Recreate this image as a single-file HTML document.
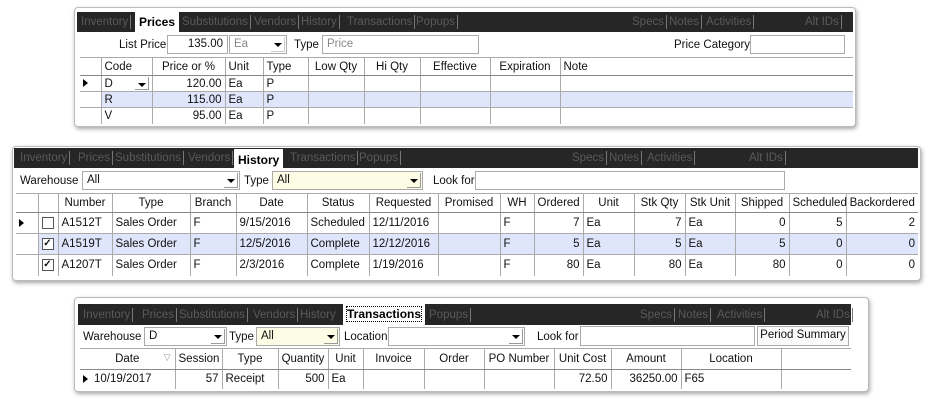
<!DOCTYPE html>
<html><head><meta charset="utf-8"><style>
*{box-sizing:border-box;margin:0;padding:0}
body{width:934px;height:403px;background:#fff;font-family:"Liberation Sans",sans-serif;font-size:11.5px;color:#111;position:relative;overflow:hidden}
.p{position:absolute;background:#fff;border:1px solid #bbb;border-radius:4px;box-shadow:1px 2px 4px rgba(0,0,0,.35)}
.bar{position:absolute;background:#262626;height:20px}
.t{position:absolute;top:3px;color:#5a5a5a;font-size:11.5px;white-space:nowrap;border-right:1px solid #777;padding:0 2px;line-height:14px}
.act{position:absolute;background:#fff;font-weight:bold;color:#000;height:22px;line-height:22px;padding:0 4px;font-size:12px}
.l{position:absolute;white-space:nowrap;font-size:11.5px;line-height:14px}
.in{position:absolute;border:1px solid #aaa;background:#fff;height:19px;line-height:17px;padding:0 4px;font-size:11.5px;white-space:nowrap}
.dd{position:absolute;right:1px;top:1px;width:14px;height:15px;border-right:1px solid #999;border-bottom:1px solid #999}
.dd:after{content:"";position:absolute;left:3px;top:6px;border:4px solid transparent;border-top:4px solid #000;border-bottom:0}
table{position:absolute;border-collapse:collapse;table-layout:fixed}
td{border:1px solid #aaa;padding:0 3px;white-space:nowrap;overflow:hidden;font-size:11.5px;line-height:14px}
tr.h td{text-align:center;border-bottom:1px solid #888}
tr.s td{background:#dfe6fb}
.r{text-align:right}
.ar{display:inline-block;border:4px solid transparent;border-left:5px solid #000;border-right:0;vertical-align:middle}
.cb{display:inline-block;width:12px;height:12px;border:1px solid #555;background:#fff;vertical-align:middle;font-size:10px;line-height:10px;text-align:center;font-weight:bold}
.nb td{border-bottom:0}
.p1 tr{height:16px}.p1 tr.h{height:18px}
.p2 tr{height:21px}.p2 tr.h{height:19px}
.p3 tr{height:19px}.p3 tr.h{height:21px}
</style></head><body>

<!-- Panel 1 -->
<div class="p" style="left:74px;top:7px;width:782px;height:120px"></div>
<div class="bar" style="left:77px;top:12px;width:776px"></div>
<span class="t" style="left:79px;top:15px">Inventory</span>
<div class="act" style="left:135px;top:11px">Prices</div>
<span class="t" style="left:180px;top:15px">Substitutions</span>
<span class="t" style="left:252px;top:15px">Vendors</span>
<span class="t" style="left:299px;top:15px">History</span>
<span class="t" style="left:345px;top:15px">Transactions</span>
<span class="t" style="left:414px;top:15px">Popups</span>
<span class="t" style="left:630px;top:15px">Specs</span>
<span class="t" style="left:667px;top:15px">Notes</span>
<span class="t" style="left:704px;top:15px">Activities</span>
<span class="t" style="left:803px;top:15px">Alt IDs</span>
<span class="l" style="left:119px;top:38px">List Price</span>
<div class="in r" style="left:167px;top:35px;width:61px">135.00</div>
<div class="in" style="left:229px;top:35px;width:58px;color:#888">Ea<span class="dd" style="border-color:#ccc;display:block"></span></div>
<span class="l" style="left:294px;top:38px">Type</span>
<div class="in" style="left:322px;top:35px;width:157px;color:#888">Price</div>
<span class="l" style="left:674px;top:38px">Price Category</span>
<div class="in" style="left:750px;top:35px;width:95px"></div>
<table class="p1" style="left:80px;top:57px;width:773px">
<colgroup><col style="width:21px"><col style="width:51px"><col style="width:73px"><col style="width:38px"><col style="width:45px"><col style="width:56px"><col style="width:56px"><col style="width:70px"><col style="width:70px"><col></colgroup>
<tr class="h"><td style="border-left:0"></td><td style="text-align:left">Code</td><td class="r">Price or %</td><td style="text-align:left">Unit</td><td style="text-align:left">Type</td><td>Low Qty</td><td>Hi Qty</td><td class="r">Effective</td><td class="r">Expiration</td><td style="text-align:left;border-right:0">Note</td></tr>
<tr><td style="border-left:0"><span class="ar"></span></td><td style="position:relative">D<span class="dd" style="top:1px;right:3px;width:14px;height:13px"></span></td><td class="r">120.00</td><td>Ea</td><td>P</td><td></td><td></td><td></td><td></td><td style="border-right:0"></td></tr>
<tr class="s"><td style="background:#fff;border-left:0"></td><td>R</td><td class="r">115.00</td><td>Ea</td><td>P</td><td></td><td></td><td></td><td></td><td style="border-right:0"></td></tr>
<tr class="nb"><td style="border-left:0"></td><td>V</td><td class="r">95.00</td><td>Ea</td><td>P</td><td></td><td></td><td></td><td></td><td style="border-right:0"></td></tr>
</table>

<!-- Panel 2 -->
<div class="p" style="left:12px;top:146px;width:909px;height:135px"></div>
<div class="bar" style="left:14px;top:148px;width:904px"></div>
<span class="t" style="left:18px;top:151px">Inventory</span>
<span class="t" style="left:76px;top:151px">Prices</span>
<span class="t" style="left:113px;top:151px">Substitutions</span>
<span class="t" style="left:186px;top:151px">Vendors</span>
<div class="act" style="left:234px;top:149px">History</div>
<span class="t" style="left:288px;top:151px">Transactions</span>
<span class="t" style="left:357px;top:151px">Popups</span>
<span class="t" style="left:570px;top:151px">Specs</span>
<span class="t" style="left:607px;top:151px">Notes</span>
<span class="t" style="left:645px;top:151px">Activities</span>
<span class="t" style="left:747px;top:151px">Alt IDs</span>
<span class="l" style="left:20px;top:174px">Warehouse</span>
<div class="in" style="left:82px;top:171px;width:158px">All<span class="dd"></span></div>
<span class="l" style="left:244px;top:174px">Type</span>
<div class="in" style="left:272px;top:171px;width:151px;background:#fdfde6">All<span class="dd"></span></div>
<span class="l" style="left:433px;top:174px">Look for</span>
<div class="in" style="left:475px;top:171px;width:310px"></div>
<table class="p2" style="left:16px;top:193px;width:902px">
<colgroup><col style="width:22px"><col style="width:20px"><col style="width:54px"><col style="width:78px"><col style="width:46px"><col style="width:71px"><col style="width:62px"><col style="width:69px"><col style="width:62px"><col style="width:34px"><col style="width:49px"><col style="width:51px"><col style="width:51px"><col style="width:50px"><col style="width:54px"><col style="width:57px"><col></colgroup>
<tr class="h"><td style="border-left:0"></td><td></td><td>Number</td><td>Type</td><td>Branch</td><td>Date</td><td>Status</td><td>Requested</td><td>Promised</td><td>WH</td><td>Ordered</td><td>Unit</td><td>Stk Qty</td><td>Stk Unit</td><td>Shipped</td><td>Scheduled</td><td style="border-right:0">Backordered</td></tr>
<tr><td style="border-left:0"><span class="ar"></span></td><td><span class="cb"></span></td><td>A1512T</td><td>Sales Order</td><td>F</td><td>9/15/2016</td><td>Scheduled</td><td>12/11/2016</td><td></td><td>F</td><td class="r">7</td><td>Ea</td><td class="r">7</td><td>Ea</td><td class="r">0</td><td class="r">5</td><td class="r" style="border-right:0">2</td></tr>
<tr class="s"><td style="background:#fff;border-left:0"></td><td><span class="cb">✓</span></td><td>A1519T</td><td>Sales Order</td><td>F</td><td>12/5/2016</td><td>Complete</td><td>12/12/2016</td><td></td><td>F</td><td class="r">5</td><td>Ea</td><td class="r">5</td><td>Ea</td><td class="r">5</td><td class="r">0</td><td class="r" style="border-right:0">0</td></tr>
<tr class="nb"><td style="border-left:0"></td><td><span class="cb">✓</span></td><td>A1207T</td><td>Sales Order</td><td>F</td><td>2/3/2016</td><td>Complete</td><td>1/19/2016</td><td></td><td>F</td><td class="r">80</td><td>Ea</td><td class="r">80</td><td>Ea</td><td class="r">80</td><td class="r">0</td><td class="r" style="border-right:0">0</td></tr>
</table>

<!-- Panel 3 -->
<div class="p" style="left:74px;top:297px;width:795px;height:95px"></div>
<div class="bar" style="left:78px;top:304px;width:773px;height:21px"></div>
<span class="t" style="left:81px;top:308px">Inventory</span>
<span class="t" style="left:140px;top:308px">Prices</span>
<span class="t" style="left:177px;top:308px">Substitutions</span>
<span class="t" style="left:251px;top:308px">Vendors</span>
<span class="t" style="left:298px;top:308px;border:0">History</span>
<div class="act" style="left:343px;top:303px"><span style="outline:1px dotted #000">Transactions</span></div>
<span class="t" style="left:427px;top:308px">Popups</span>
<span class="t" style="left:638px;top:308px">Specs</span>
<span class="t" style="left:676px;top:308px">Notes</span>
<span class="t" style="left:715px;top:308px">Activities</span>
<span class="t" style="left:814px;top:308px">Alt IDs</span>
<span class="l" style="left:83px;top:330px">Warehouse</span>
<div class="in" style="left:144px;top:327px;width:83px">D<span class="dd"></span></div>
<span class="l" style="left:229px;top:330px">Type</span>
<div class="in" style="left:256px;top:327px;width:84px;background:#fdfde6">All<span class="dd"></span></div>
<span class="l" style="left:344px;top:330px">Location</span>
<div class="in" style="left:388px;top:327px;width:137px"><span class="dd"></span></div>
<span class="l" style="left:537px;top:330px">Look for</span>
<div class="in" style="left:580px;top:326px;width:175px;height:20px"></div>
<div class="in" style="left:757px;top:326px;width:92px;height:20px;text-align:center;background:#fafafa;padding:0">Period Summary</div>
<table class="p3" style="left:80px;top:348px;width:771px">
<colgroup><col style="width:95px"><col style="width:47px"><col style="width:56px"><col style="width:50px"><col style="width:35px"><col style="width:61px"><col style="width:60px"><col style="width:70px"><col style="width:57px"><col style="width:70px"><col style="width:100px"><col></colgroup>
<tr class="h"><td style="border-left:0;position:relative">Date<span style="position:absolute;right:4px;top:1px;color:#999;font-size:9px">▽</span></td><td>Session</td><td>Type</td><td>Quantity</td><td>Unit</td><td>Invoice</td><td>Order</td><td>PO Number</td><td>Unit Cost</td><td>Amount</td><td>Location</td><td style="border-right:0"></td></tr>
<tr class="nb"><td style="border-left:0"><span class="ar" style="margin-right:6px"></span>10/19/2017</td><td class="r">57</td><td>Receipt</td><td class="r">500</td><td>Ea</td><td></td><td></td><td></td><td class="r">72.50</td><td class="r">36250.00</td><td>F65</td><td style="border-right:0"></td></tr>
</table>
</body></html>
